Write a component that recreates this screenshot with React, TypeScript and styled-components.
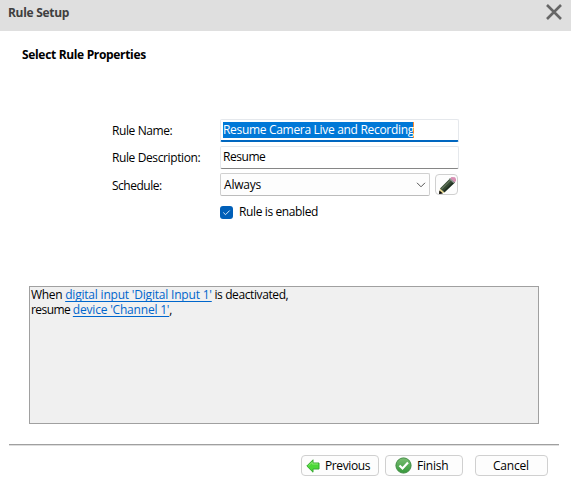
import React from "react";
import styled, { createGlobalStyle } from "styled-components";

const GlobalStyle = createGlobalStyle`
  * { box-sizing: border-box; }
  body {
    margin: 0;
    background: #fff;
    color: #000;
    font: 12px/16px "Open Sans", "Noto Sans", sans-serif;
  }
`;

const Dialog = styled.div`
  width: 571px;
  height: 488px;
  display: flex;
  flex-direction: column;
  overflow: hidden;
  background: #fff;
`;

const TitleBar = styled.header`
  height: 31px;
  flex: none;
  display: flex;
  align-items: flex-start;
  justify-content: space-between;
  padding: 4px 8px 0;
  background: #dfdfdf;
`;

const Text = styled.span<{ $spacing?: number }>`
  white-space: pre;
  letter-spacing: ${(p) => p.$spacing ?? 0}px;
`;

const Title = styled(Text)`
  color: #404040;
  font-weight: 700;
  line-height: 18px;
`;

const CloseButton = styled.button`
  width: 18px;
  height: 18px;
  margin: -1px 0 0;
  padding: 0;
  border: 0;
  background: none;
  svg { display: block; }
`;

const Heading = styled.h1`
  margin: 16px 0 0 22px;
  height: 16px;
  font-size: 12px;
  line-height: 16px;
  font-weight: 700;
`;

const Form = styled.form`
  display: grid;
  grid-template-columns: 108px 239px;
  grid-template-rows: 23px 23px 27px 16px;
  row-gap: 4px;
  margin: 56px 0 0 112px;
`;

const Label = styled.label<{ $top?: number }>`
  padding-top: ${(p) => p.$top ?? 4}px;
`;

const Field = styled.div<{ $focused?: boolean }>`
  height: 23px;
  padding: 2px 2px 0;
  border: 1px solid #e5e8ec;
  border-bottom: ${(p) => (p.$focused ? "2px solid #0067c0" : "1px solid #868686")};
  border-radius: 2px;
  background: #fff;
`;

const Selection = styled.span`
  display: block;
  width: 191px;
  height: 16px;
  color: #fff;
  background: #0078d7;
  border-right: 1px solid #ff8728;
`;

const ScheduleControls = styled.div`
  display: flex;
  gap: 5px;
`;

const Select = styled.div`
  width: 210px;
  height: 23px;
  display: flex;
  align-items: center;
  justify-content: space-between;
  padding: 1px 3px 0;
  border: 1px solid #d0d0d0;
  border-bottom-color: #bcbcbc;
  border-radius: 2px;
  background: #fdfdfd;
`;

const IconButton = styled.button`
  width: 23px;
  height: 21px;
  margin: 1px 0 0;
  padding: 0;
  border: 1px solid #d0d0d0;
  border-radius: 4px;
  background: #fdfdfd;
  svg { display: block; }
`;

const CheckRow = styled.label`
  grid-column: 2;
  display: flex;
  align-items: center;
  gap: 6px;
`;

const CheckBox = styled.span`
  width: 13px;
  height: 13px;
  border-radius: 3px;
  background: #005fb8;
  svg { display: block; }
`;

const Summary = styled.section`
  width: 510px;
  height: 138px;
  flex: none;
  margin: 66px 0 0 29px;
  padding: 0 1px;
  border: 1px solid #a0a0a0;
  background: #f0f0f0;
  line-height: 15px;
`;

const Line = styled.div`
  height: 15px;
  display: flex;
`;

const Link = styled.a<{ $spacing?: number }>`
  color: #0066cc;
  white-space: pre;
  letter-spacing: ${(p) => p.$spacing ?? 0}px;
  text-decoration: underline;
  text-decoration-thickness: 1px;
  text-underline-offset: 2px;
  text-decoration-skip-ink: none;
`;

const Divider = styled.div`
  height: 2px;
  flex: none;
  margin: 20px 12px 0 9px;
  border-top: 1px solid #a0a0a0;
  border-bottom: 1px solid #dedede;
`;

const Footer = styled.footer`
  display: flex;
  margin: 9px 23px 0 301px;
`;

const Button = styled.button<{ $width: number; $gap?: number; $left?: number; $pad?: number }>`
  width: ${(p) => p.$width}px;
  height: 21px;
  flex: none;
  display: flex;
  align-items: center;
  gap: ${(p) => p.$gap ?? 0}px;
  margin: 0 0 0 ${(p) => p.$left ?? 0}px;
  padding: 0 0 0 ${(p) => p.$pad ?? 0}px;
  border: 1px solid #d0d0d0;
  border-radius: 4px;
  background: #fdfdfd;
  color: #000;
  font: inherit;
  svg { flex: none; }
`;

const PencilIcon = () => (
  <svg width="21" height="19" viewBox="0 0 21 19">
    <path d="M3 19 4 13.5 8.5 17.5Z" fill="#e5d58c" />
    <path d="M3 19 3.4 15.5 7 18.5Z" fill="#080808" />
    <path d="M4 13.5 14 3.5 19 7.5 8.5 17.5Z" fill="#344832" />
    <path d="M5.5 14 15 4.8" stroke="#61745a" strokeWidth="1.3" />
    <path d="M8 16.5 18 7" stroke="#1d2a20" strokeWidth="1.2" />
    <path d="M14 3.5 15.5 2 19 2.2 20 4 20 6 18.5 7.5Z" fill="#d990b5" />
    <path d="M13.5 3.5 18 7.8" stroke="#8d9993" strokeWidth="1.2" />
  </svg>
);

const PreviousIcon = () => (
  <svg width="14" height="14" viewBox="0 0 14 14">
    <path d="M.8 7 7 .8V4H13V10H7V13.2Z" fill="#4bd838" stroke="#39a832" strokeLinejoin="round" />
    <path d="M2.5 6.8 6.2 3.2V5H12" fill="none" stroke="#8aea70" />
  </svg>
);

const FinishIcon = () => (
  <svg width="17" height="17" viewBox="0 0 17 17">
    <defs>
      <linearGradient id="finish" x2="0" y2="1">
        <stop stopColor="#79bd72" />
        <stop offset="1" stopColor="#35983a" />
      </linearGradient>
    </defs>
    <circle cx="8.5" cy="8.5" r="7.6" fill="url(#finish)" stroke="#428c45" />
    <path d="m4.5 8.5 3 3 5.5-6" fill="none" stroke="#fff" strokeWidth="2.2" />
  </svg>
);

export default function App() {
  return (
    <>
      <GlobalStyle />
      <Dialog>
        <TitleBar>
          <Title $spacing={-0.3}>Rule Setup</Title>
          <CloseButton aria-label="Close">
            <svg width="18" height="18" viewBox="0 0 18 18">
              <path d="m2 2 14 14M16 2 2 16" stroke="#666" strokeWidth="2.6" />
            </svg>
          </CloseButton>
        </TitleBar>
        <Heading><Text $spacing={-0.33}>Select Rule Properties</Text></Heading>
        <Form>
          <Label><Text $spacing={-0.4}>Rule Name:</Text></Label>
          <Field $focused>
            <Selection><Text $spacing={-0.31}>Resume Camera Live and Recording</Text></Selection>
          </Field>
          <Label><Text $spacing={-0.39}>Rule Description:</Text></Label>
          <Field><Text $spacing={-0.45}>Resume</Text></Field>
          <Label $top={5}><Text $spacing={-0.5}>Schedule:</Text></Label>
          <ScheduleControls>
            <Select>
              <Text $spacing={-0.2}>Always</Text>
              <svg width="10" height="6" viewBox="0 0 10 6">
                <path d="m1 .8 4 4 4-4" fill="none" stroke="#555" />
              </svg>
            </Select>
            <IconButton type="button" aria-label="Edit schedule"><PencilIcon /></IconButton>
          </ScheduleControls>
          <CheckRow>
            <CheckBox>
              <svg width="13" height="13" viewBox="0 0 13 13">
                <path d="m3.3 6.5 2.2 2.2 4.2-4.2" fill="none" stroke="#d5e8f8" />
              </svg>
            </CheckBox>
            <Text $spacing={-0.38}>Rule is enabled</Text>
          </CheckRow>
        </Form>
        <Summary>
          <Line>
            <Text $spacing={-0.3}>When </Text>
            <Link $spacing={-0.2}>digital input 'Digital Input 1'</Link>
            <Text $spacing={-0.4}> is deactivated,</Text>
          </Line>
          <Line>
            <Text $spacing={-0.55}>resume </Text>
            <Link $spacing={-0.2}>device 'Channel 1'</Link>
            <Text>,</Text>
          </Line>
        </Summary>
        <Divider />
        <Footer>
          <Button $width={78} $pad={4} $gap={5}>
            <PreviousIcon /><Text $spacing={-0.4}>Previous</Text>
          </Button>
          <Button $width={78} $left={6} $pad={9} $gap={5}>
            <FinishIcon /><Text $spacing={-0.2}>Finish</Text>
          </Button>
          <Button $width={73} $left={12} $pad={17}>
            <Text $spacing={-0.2}>Cancel</Text>
          </Button>
        </Footer>
      </Dialog>
    </>
  );
}
